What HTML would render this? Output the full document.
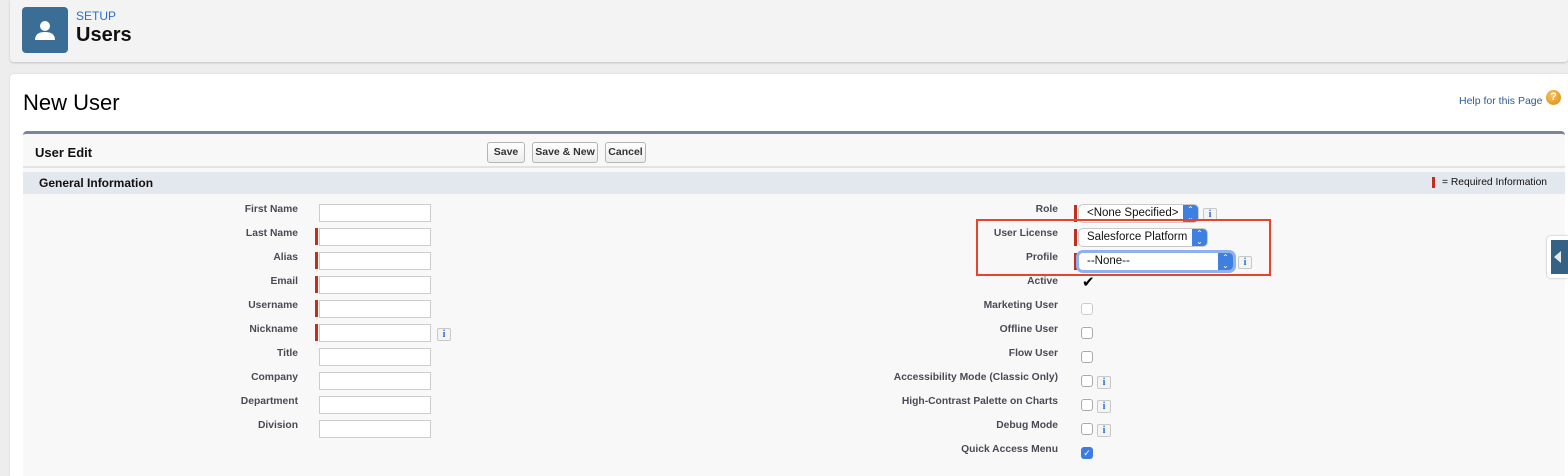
<!DOCTYPE html>
<html><head><style>
*{box-sizing:border-box;margin:0;padding:0}
body{width:1568px;height:476px;overflow:hidden;background:#ededed;font-family:"Liberation Sans",Arial,sans-serif;position:relative}
.a{position:absolute}
.lbl{position:absolute;font-size:10.3px;font-weight:bold;color:#4a4a56;text-align:right;white-space:nowrap;margin-top:1px}
.inp{position:absolute;width:112px;height:18px;border:1px solid #ccc;background:#fff}
.req{position:absolute;width:3px;height:17px;background:#c0301e}
.ib{position:absolute;width:14px;height:13px;border:1px solid #c8c8c8;border-radius:2px;background:#f4f4f4;font:bold 10px "Liberation Serif",serif;color:#2a6ccf;text-align:center;line-height:12px}
.cb{position:absolute;width:12px;height:12px;border:1px solid #aaa;border-radius:3px;background:#fff}
.btn{position:absolute;top:142px;height:21px;border:1px solid #b5b5b5;border-radius:3px;background:linear-gradient(#fff,#ececec);font-size:10.5px;font-weight:bold;color:#333;line-height:19px;text-align:center}
.sel{position:absolute;height:17px;border-radius:4px;background:#fff;box-shadow:0 0 0 1px #c9c9c9;font-size:11.5px;color:#111;line-height:17px;padding-left:8px}
.arr{position:absolute;right:0;top:0;width:15px;height:100%;background:#3f7fe0;border-radius:0 4px 4px 0;color:#fff;font-size:8px;line-height:8px;text-align:center;padding-top:1px}
</style></head><body>
<div class="a" style="left:10px;top:0;width:1558px;height:62px;background:#f3f3f3;border-radius:0 0 4px 4px;box-shadow:0 1px 2px rgba(0,0,0,.18)"></div>
<div class="a" style="left:22px;top:7px;width:46px;height:46px;background:#3b6e96;border-radius:4px">
<svg width="46" height="46" viewBox="0 0 46 46"><circle cx="23" cy="19" r="5" fill="#fff"/><path d="M13 33 q0-8 10-8 q10 0 10 8 z" fill="#fff"/></svg></div>
<div class="a" style="left:76px;top:9px;font-size:12px;color:#2a6fd0">SETUP</div>
<div class="a" style="left:76px;top:24px;font-size:20px;font-weight:bold;color:#111">Users</div>
<div class="a" style="left:10px;top:74px;width:1558px;height:402px;background:#fff;border-radius:4px 0 0 0;box-shadow:0 0 2px rgba(0,0,0,.12)"></div>
<div class="a" style="left:23px;top:90px;font-size:22px;color:#000">New User</div>
<div class="a" style="left:1459px;top:95px;font-size:10.5px;color:#2a5c9a">Help for this Page</div>
<div class="a" style="left:1546px;top:90px;width:15px;height:15px;border-radius:50%;background:radial-gradient(circle at 40% 35%,#f7c25a,#d78a12);color:#fff;font-size:11px;font-weight:bold;text-align:center;line-height:15px">?</div>
<div class="a" style="left:23px;top:131px;width:1542px;height:345px;background:#f8f8f8;border-top:3px solid #7a8599;border-radius:4px 4px 0 0"></div>
<div class="a" style="left:23px;top:166px;width:1542px;height:2px;background:#e2e2e2"></div>
<div class="a" style="left:35px;top:145px;font-size:13px;font-weight:bold;color:#111">User Edit</div>
<div class="btn" style="left:487px;width:38px">Save</div>
<div class="btn" style="left:532px;width:66px">Save &amp; New</div>
<div class="btn" style="left:605px;width:41px">Cancel</div>
<div class="a" style="left:23px;top:172px;width:1542px;height:22px;background:#e3e7ee"></div>
<div class="a" style="left:39px;top:176px;font-size:12px;font-weight:bold;color:#111">General Information</div>
<div class="a" style="left:1432px;top:177px;width:3px;height:11px;background:#c0301e"></div>
<div class="a" style="left:1442px;top:177px;font-size:10.3px;color:#111">= Required Information</div>
<div class="a" style="left:1547px;top:236px;width:21px;height:42px;background:#fff;border-radius:4px 0 0 4px;box-shadow:0 0 2px rgba(0,0,0,.3)"></div>
<div class="a" style="left:1551px;top:240px;width:17px;height:34px;background:#356184"></div>
<div class="a" style="left:1554px;top:251px;width:0;height:0;border-top:6px solid transparent;border-bottom:6px solid transparent;border-right:7px solid #e8e8e8"></div>

<div class="lbl" style="right:1270px;top:203px">First Name</div><div class="inp" style="left:319px;top:204px"></div>
<div class="lbl" style="right:1270px;top:227px">Last Name</div><div class="req" style="left:315px;top:228px"></div><div class="inp" style="left:319px;top:228px"></div>
<div class="lbl" style="right:1270px;top:251px">Alias</div><div class="req" style="left:315px;top:252px"></div><div class="inp" style="left:319px;top:252px"></div>
<div class="lbl" style="right:1270px;top:275px">Email</div><div class="req" style="left:315px;top:276px"></div><div class="inp" style="left:319px;top:276px"></div>
<div class="lbl" style="right:1270px;top:299px">Username</div><div class="req" style="left:315px;top:300px"></div><div class="inp" style="left:319px;top:300px"></div>
<div class="lbl" style="right:1270px;top:323px">Nickname</div><div class="req" style="left:315px;top:324px"></div><div class="inp" style="left:319px;top:324px"></div><div class="ib" style="left:437px;top:328px">i</div>
<div class="lbl" style="right:1270px;top:347px">Title</div><div class="inp" style="left:319px;top:348px"></div>
<div class="lbl" style="right:1270px;top:371px">Company</div><div class="inp" style="left:319px;top:372px"></div>
<div class="lbl" style="right:1270px;top:395px">Department</div><div class="inp" style="left:319px;top:396px"></div>
<div class="lbl" style="right:1270px;top:419px">Division</div><div class="inp" style="left:319px;top:420px"></div>

<div class="lbl" style="right:510px;top:203px">Role</div><div class="req" style="left:1074px;top:205px"></div>
<div class="sel" style="left:1079px;top:205px;width:119px">&lt;None Specified&gt;<div class="arr">⌃<br>⌄</div></div><div class="ib" style="left:1203px;top:208px">i</div>
<div class="lbl" style="right:510px;top:227px">User License</div><div class="req" style="left:1074px;top:229px"></div>
<div class="sel" style="left:1079px;top:229px;width:128px">Salesforce Platform<div class="arr">⌃<br>⌄</div></div>
<div class="lbl" style="right:510px;top:251px">Profile</div><div class="req" style="left:1074px;top:253px"></div>
<div class="sel" style="left:1079px;top:253px;width:154px;box-shadow:0 0 0 3px #8fb1ef">--None--<div class="arr">⌃<br>⌄</div></div><div class="ib" style="left:1238px;top:256px">i</div>
<div class="a" style="left:976px;top:219px;width:295px;height:57px;border:2px solid #e8432c"></div>
<div class="lbl" style="right:510px;top:275px">Active</div>
<div class="a" style="left:1082px;top:273px;font-size:15px;color:#000">✔</div>
<div class="lbl" style="right:510px;top:299px">Marketing User</div><div class="cb" style="left:1081px;top:303px;border-color:#ccc"></div>
<div class="lbl" style="right:510px;top:323px">Offline User</div><div class="cb" style="left:1081px;top:327px"></div>
<div class="lbl" style="right:510px;top:347px">Flow User</div><div class="cb" style="left:1081px;top:351px"></div>
<div class="lbl" style="right:510px;top:371px">Accessibility Mode (Classic Only)</div><div class="cb" style="left:1081px;top:375px"></div><div class="ib" style="left:1097px;top:376px">i</div>
<div class="lbl" style="right:510px;top:395px">High-Contrast Palette on Charts</div><div class="cb" style="left:1081px;top:399px"></div><div class="ib" style="left:1097px;top:400px">i</div>
<div class="lbl" style="right:510px;top:419px">Debug Mode</div><div class="cb" style="left:1081px;top:423px"></div><div class="ib" style="left:1097px;top:424px">i</div>
<div class="lbl" style="right:510px;top:443px">Quick Access Menu</div>
<div class="a" style="left:1081px;top:447px;width:12px;height:12px;border-radius:3px;background:#3d7de0;color:#fff;font-size:9px;line-height:12px;text-align:center">✓</div>
</body></html>
